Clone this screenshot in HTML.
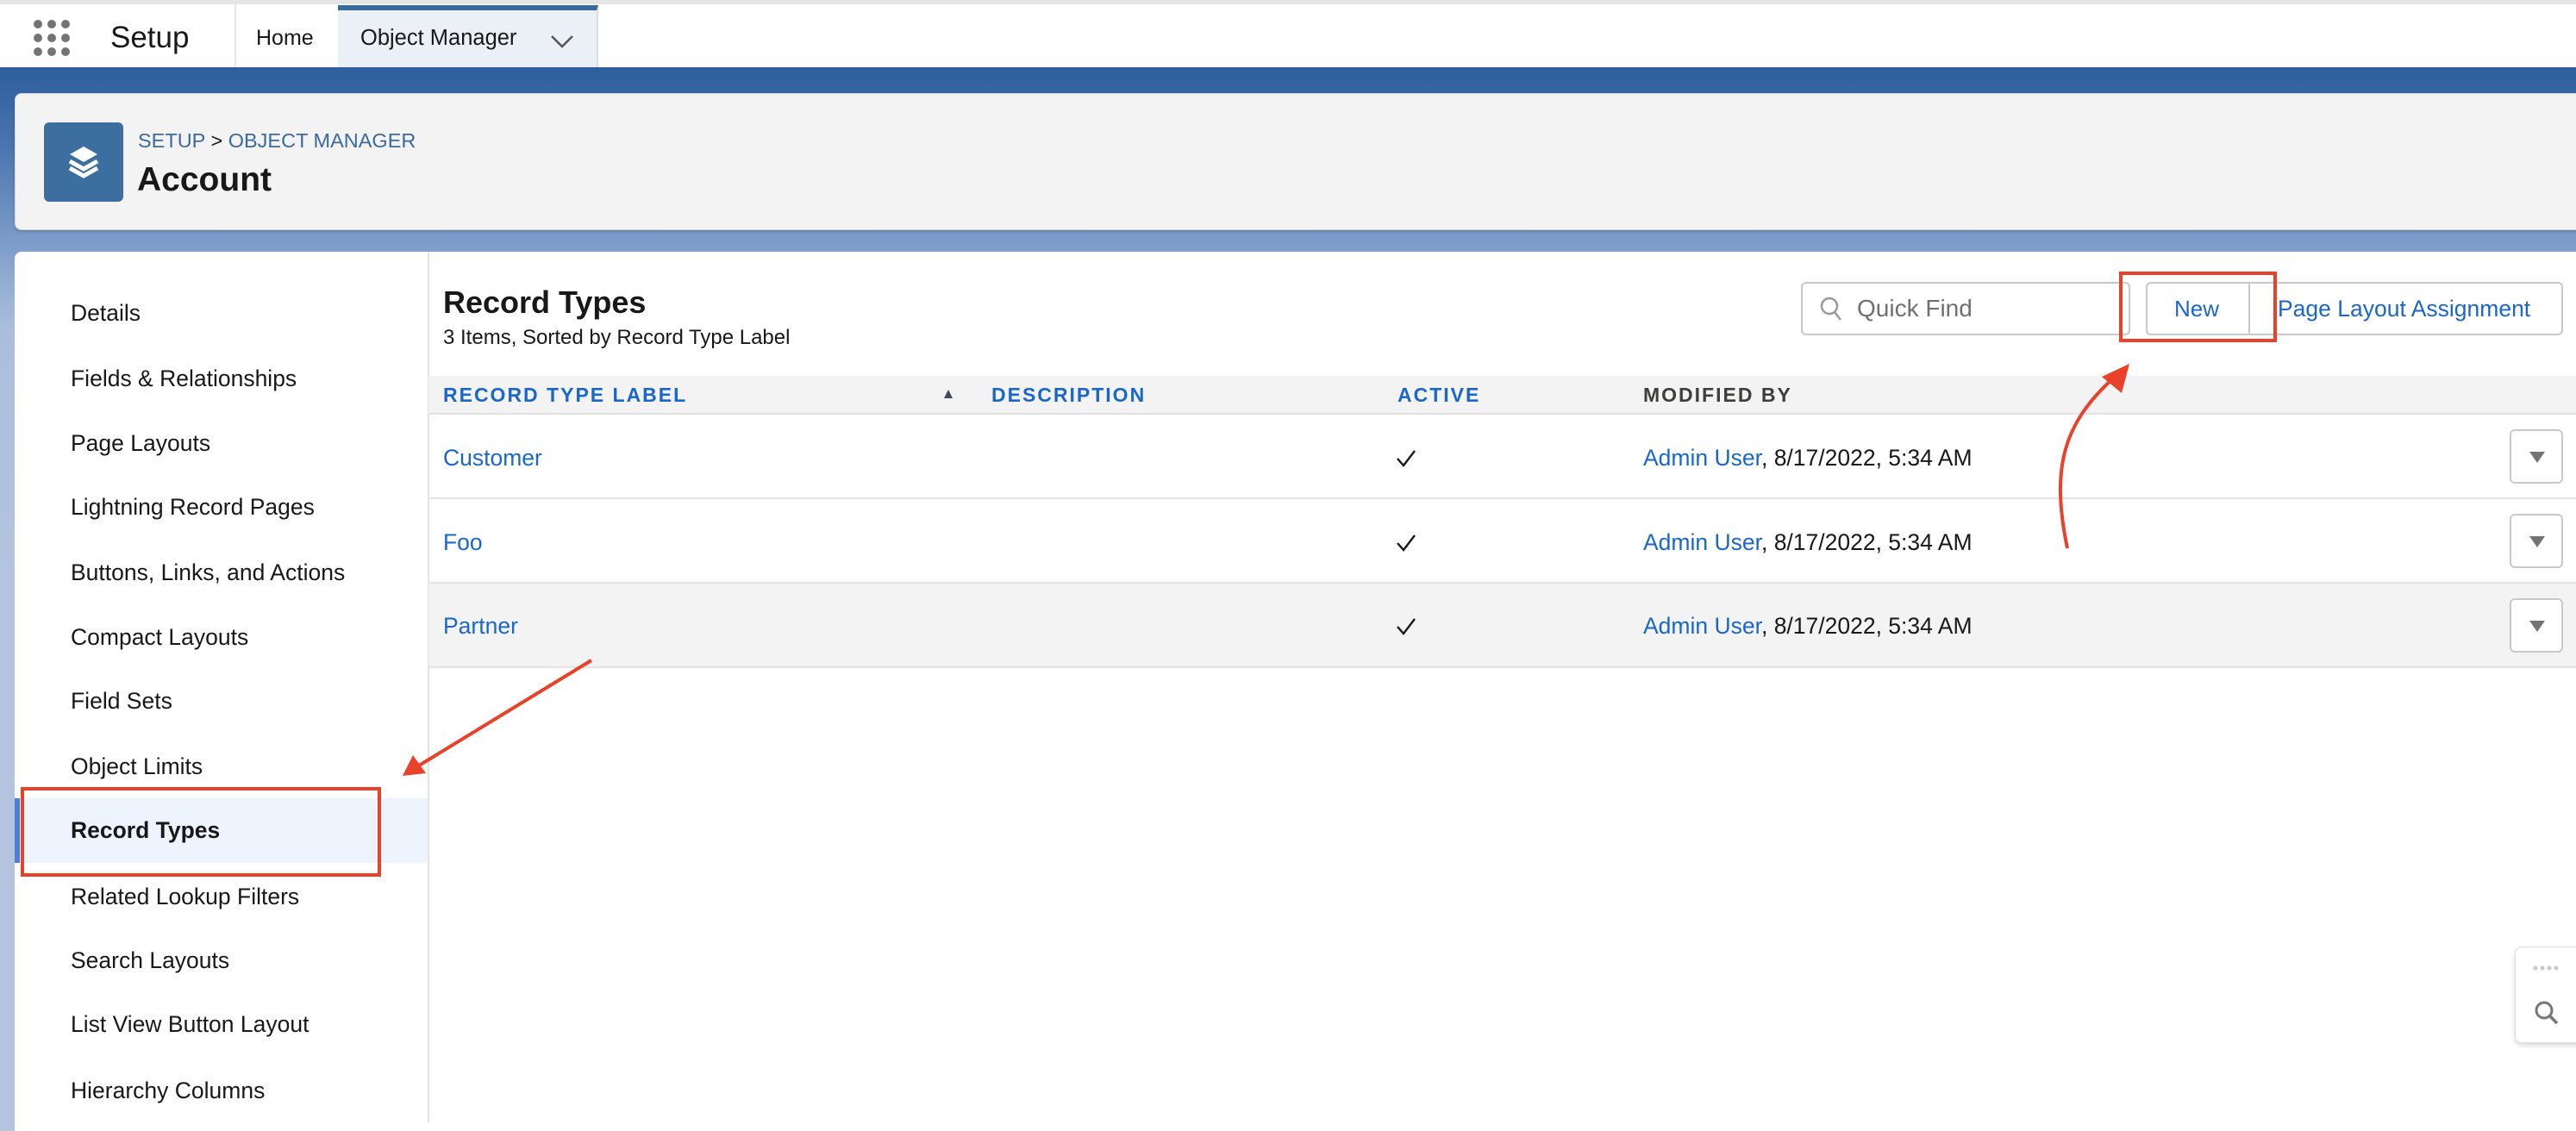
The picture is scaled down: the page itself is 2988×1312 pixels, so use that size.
<!DOCTYPE html>
<html><head><meta charset="utf-8"><style>
*{margin:0;padding:0;box-sizing:border-box}
body{width:2988px;height:1302px;overflow:hidden;font-family:"Liberation Sans",sans-serif;background:#b4c4de;position:relative;color:#181818}
.abs{position:absolute}
.bg{left:0;top:78px;width:2988px;height:1224px;background:linear-gradient(#2e5e9d 0px,#4a74ad 90px,#7c9bc9 200px,#aabedc 300px,#b4c4de 600px)}
.nav{left:0;top:0;width:2988px;height:78px;background:#fff;border-top:5px solid #e5e5e5}
.hdr{left:17px;top:108px;width:2990px;height:159px;background:#f3f3f3;border-radius:8px;border:1px solid #d8d8d8;box-shadow:0 2px 3px rgba(0,0,0,.15)}
.card{left:17px;top:292px;width:2990px;height:1020px;background:#fff;border-radius:8px 0 0 0}
.side a{position:absolute;left:82px;font-size:26.5px;color:#181818;text-decoration:none;line-height:30px}
.th{position:absolute;top:446px;font-size:23px;font-weight:bold;letter-spacing:2px;color:#1b67c9;line-height:24px}
.lnk{color:#1b67c9}
.cell{position:absolute;font-size:26.5px;line-height:28px}
.dd{position:absolute;left:2911px;width:62px;height:63px;border:2px solid #c9c9c9;border-radius:6px;background:#fff}
.dd:after{content:"";position:absolute;left:21px;top:24px;border-left:9px solid transparent;border-right:9px solid transparent;border-top:13px solid #747474}
.chk{position:absolute;left:1618px;width:26px;height:26px}
</style></head><body>
<div class="abs bg"></div>
<div class="abs nav">
 <svg class="abs" style="left:38px;top:17px" width="46" height="46">
  <g fill="#747474"><circle cx="6" cy="6" r="5"/><circle cx="22" cy="6" r="5"/><circle cx="38" cy="6" r="5"/><circle cx="6" cy="22" r="5"/><circle cx="22" cy="22" r="5"/><circle cx="38" cy="22" r="5"/><circle cx="6" cy="38" r="5"/><circle cx="22" cy="38" r="5"/><circle cx="38" cy="38" r="5"/></g></svg>
 <div class="abs" style="left:128px;top:19px;font-size:35px">Setup</div>
 <div class="abs" style="left:272px;top:0;width:2px;height:73px;background:#e5e5e5"></div>
 <div class="abs" style="left:297px;top:25px;font-size:25px">Home</div>
 <div class="abs" style="left:392px;top:1px;width:302px;height:72px;background:#eaf0f5;border-top:6px solid #3a6a9e;border-right:2px solid #dcdcdc"></div>
 <div class="abs" style="left:418px;top:25px;font-size:25.5px">Object Manager</div>
 <svg class="abs" style="left:638px;top:34px" width="28" height="18"><path d="M2 3 L14 15 L26 3" stroke="#555" stroke-width="2.5" fill="none"/></svg>
</div>
<div class="abs hdr">
 <div class="abs" style="left:33px;top:33px;width:92px;height:92px;background:#3c6e9f;border-radius:6px">
  <svg width="92" height="92"><path d="M46 28 L62 37 L46 46 L30 37 Z" fill="#fff"/><path d="M30 45 L46 54 L62 45" stroke="#fff" stroke-width="5" fill="none"/><path d="M30 53 L46 62 L62 53" stroke="#fff" stroke-width="5" fill="none"/></svg>
 </div>
 <div class="abs" style="left:142px;top:41px;font-size:23.5px;color:#3a6a9e">SETUP <span style="color:#181818">&gt;</span> OBJECT MANAGER</div>
 <div class="abs" style="left:141px;top:78px;font-size:39px;font-weight:bold">Account</div>
</div>
<div class="abs card"></div>
<div class="abs" style="left:496px;top:292px;width:2px;height:1010px;background:#e3e3e3"></div>
<div class="abs" style="left:17px;top:926px;width:479px;height:75px;background:#eef4fd"></div>
<div class="abs" style="left:17px;top:926px;width:6px;height:75px;background:#4a7fd8"></div>
<div class="side">
<a style="top:348px">Details</a>
<a style="top:424px">Fields &amp; Relationships</a>
<a style="top:499px">Page Layouts</a>
<a style="top:573px">Lightning Record Pages</a>
<a style="top:649px">Buttons, Links, and Actions</a>
<a style="top:724px">Compact Layouts</a>
<a style="top:798px">Field Sets</a>
<a style="top:874px">Object Limits</a>
<a style="top:948px;font-weight:bold">Record Types</a>
<a style="top:1025px">Related Lookup Filters</a>
<a style="top:1099px">Search Layouts</a>
<a style="top:1173px">List View Button Layout</a>
<a style="top:1250px">Hierarchy Columns</a>
</div>
<div class="abs" style="left:24px;top:913px;width:418px;height:104px;border:4px solid #e8432a"></div>

<div class="abs" style="left:514px;top:330px;font-size:36px;font-weight:bold">Record Types</div>
<div class="abs" style="left:514px;top:378px;font-size:24px">3 Items, Sorted by Record Type Label</div>

<div class="abs" style="left:2089px;top:327px;width:382px;height:62px;border:2px solid #c9c9c9;border-radius:6px;background:#fff"></div>
<svg class="abs" style="left:2110px;top:343px" width="28" height="32"><circle cx="12" cy="12" r="9" stroke="#999" stroke-width="2.5" fill="none"/><path d="M18 19 L25 28" stroke="#999" stroke-width="2.5"/></svg>
<div class="abs" style="left:2154px;top:342px;font-size:28px;color:#707070">Quick Find</div>
<div class="abs" style="left:2489px;top:327px;width:484px;height:62px;border:2px solid #c9c9c9;border-radius:6px;background:#fff"></div>
<div class="abs" style="left:2608px;top:329px;width:2px;height:58px;background:#c9c9c9"></div>
<div class="abs" style="left:2522px;top:343px;font-size:26px;color:#1b67c9">New</div>
<div class="abs" style="left:2642px;top:343px;font-size:26.5px;color:#1b67c9">Page Layout Assignment</div>
<div class="abs" style="left:2458px;top:315px;width:183px;height:82px;border:4px solid #e8432a"></div>

<div class="abs" style="left:497px;top:436px;width:2491px;height:45px;background:#f3f3f3;border-bottom:2px solid #e3e3e3"></div>
<div class="th" style="left:514px">RECORD TYPE LABEL</div>
<svg class="abs" style="left:1094px;top:451px" width="12" height="12"><path d="M6 1 L11 11 L1 11 Z" fill="#3e4a5c"/></svg>
<div class="th" style="left:1150px">DESCRIPTION</div>
<div class="th" style="left:1621px">ACTIVE</div>
<div class="th" style="left:1906px;color:#3e3e3c">MODIFIED BY</div>

<div class="abs" style="left:497px;top:577px;width:2491px;height:2px;background:#e3e3e3"></div>
<div class="abs" style="left:497px;top:677px;width:2491px;height:98px;background:#f3f3f3"></div>
<div class="abs" style="left:497px;top:675px;width:2491px;height:2px;background:#e3e3e3"></div>
<div class="abs" style="left:497px;top:773px;width:2491px;height:2px;background:#e3e3e3"></div>

<div class="cell lnk" style="left:514px;top:517px">Customer</div>
<div class="cell lnk" style="left:514px;top:615px">Foo</div>
<div class="cell lnk" style="left:514px;top:712px">Partner</div>
<svg class="chk" style="top:519px"><path d="M3 13 L10 21 L23 4" stroke="#181818" stroke-width="2.4" fill="none"/></svg>
<svg class="chk" style="top:617px"><path d="M3 13 L10 21 L23 4" stroke="#181818" stroke-width="2.4" fill="none"/></svg>
<svg class="chk" style="top:714px"><path d="M3 13 L10 21 L23 4" stroke="#181818" stroke-width="2.4" fill="none"/></svg>
<div class="cell" style="left:1906px;top:517px"><span class="lnk">Admin User</span>, 8/17/2022, 5:34 AM</div>
<div class="cell" style="left:1906px;top:615px"><span class="lnk">Admin User</span>, 8/17/2022, 5:34 AM</div>
<div class="cell" style="left:1906px;top:712px"><span class="lnk">Admin User</span>, 8/17/2022, 5:34 AM</div>
<div class="dd" style="top:498px"></div>
<div class="dd" style="top:596px"></div>
<div class="dd" style="top:694px"></div>

<svg class="abs" style="left:0;top:0" width="2988" height="1302">
 <path d="M2398 636 C2378 540 2395 490 2452 438" stroke="#e8432a" stroke-width="4" fill="none"/>
 <path d="M2470 422 L2438 437 L2461 456 Z" fill="#e8432a"/>
 <path d="M686 766 L486 888" stroke="#e8432a" stroke-width="4" fill="none"/>
 <path d="M467 900 L479 876 L494 897 Z" fill="#e8432a"/>
</svg>

<div class="abs" style="left:2917px;top:1098px;width:80px;height:112px;background:#fff;border:1px solid #ddd;border-radius:8px;box-shadow:0 3px 6px rgba(0,0,0,.15)"></div>
<svg class="abs" style="left:2938px;top:1118px" width="32" height="10"><g fill="#c9c9c9"><circle cx="3" cy="5" r="2.5"/><circle cx="11" cy="5" r="2.5"/><circle cx="19" cy="5" r="2.5"/><circle cx="27" cy="5" r="2.5"/></g></svg>
<svg class="abs" style="left:2937px;top:1158px" width="36" height="36"><circle cx="14" cy="14" r="9" stroke="#777" stroke-width="3" fill="none"/><path d="M21 21 L29 29" stroke="#777" stroke-width="3.5"/></svg>
</body></html>
